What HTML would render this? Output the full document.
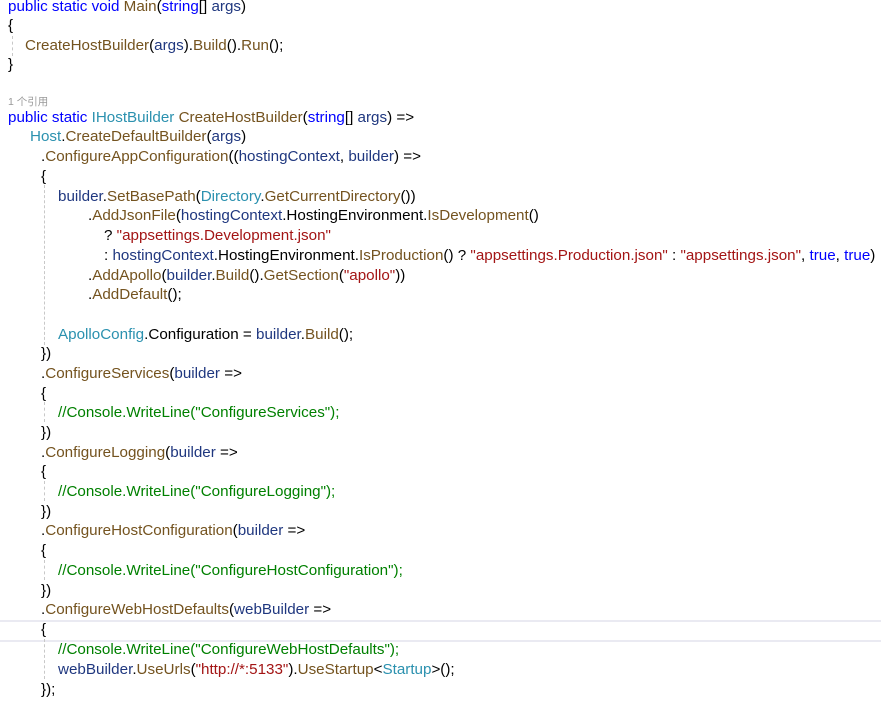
<!DOCTYPE html>
<html><head><meta charset="utf-8"><style>
html,body{margin:0;padding:0;width:881px;height:701px;background:#fff;overflow:hidden;position:relative}
.l{position:absolute;white-space:pre;font-family:"Liberation Sans","Noto Sans CJK SC",sans-serif;font-size:15.2px;line-height:20px;color:#000}
.k{color:#0000ff}.m{color:#74531f}.t{color:#2b91af}.v{color:#1f377f}.s{color:#a31515}.c{color:#008000}
.g{position:absolute;border-left:1px dashed #c8c8c8;width:0}
.hl{position:absolute;left:0;width:881px;height:18px;top:620px;border-top:2px solid #eaeaf2;border-bottom:2px solid #eaeaf2}
</style></head><body>
<div class="hl"></div>
<div class="g" style="left:12px;top:36px;height:20px"></div>
<div class="g" style="left:44px;top:185px;height:160px"></div>
<div class="g" style="left:44px;top:402px;height:20px"></div>
<div class="g" style="left:44px;top:481px;height:20px"></div>
<div class="g" style="left:44px;top:560px;height:20px"></div>
<div class="g" style="left:44px;top:639px;height:40px"></div>
<div class="l" style="top:-3px;left:8px"><span class="k">public static void</span> <span class="m">Main</span>(<span class="k">string</span>[] <span class="v">args</span>)</div>
<div class="l" style="top:16px;left:8px">{</div>
<div class="l" style="top:36px;left:25px"><span class="m">CreateHostBuilder</span>(<span class="v">args</span>).<span class="m">Build</span>().<span class="m">Run</span>();</div>
<div class="l" style="top:55px;left:8px">}</div>
<div class="l" style="top:94px;left:8px;font-size:10.5px;line-height:16px;color:#999">1 个引用</div>
<div class="l" style="top:108px;left:8px"><span class="k">public static</span> <span class="t">IHostBuilder</span> <span class="m">CreateHostBuilder</span>(<span class="k">string</span>[] <span class="v">args</span>) =&gt;</div>
<div class="l" style="top:127px;left:30px"><span class="t">Host</span>.<span class="m">CreateDefaultBuilder</span>(<span class="v">args</span>)</div>
<div class="l" style="top:147px;left:41px">.<span class="m">ConfigureAppConfiguration</span>((<span class="v">hostingContext</span>, <span class="v">builder</span>) =&gt;</div>
<div class="l" style="top:167px;left:41px">{</div>
<div class="l" style="top:187px;left:58px"><span class="v">builder</span>.<span class="m">SetBasePath</span>(<span class="t">Directory</span>.<span class="m">GetCurrentDirectory</span>())</div>
<div class="l" style="top:206px;left:88px">.<span class="m">AddJsonFile</span>(<span class="v">hostingContext</span>.HostingEnvironment.<span class="m">IsDevelopment</span>()</div>
<div class="l" style="top:226px;left:104px">? <span class="s">"appsettings.Development.json"</span></div>
<div class="l" style="top:246px;left:104px">: <span class="v">hostingContext</span>.HostingEnvironment.<span class="m">IsProduction</span>() ? <span class="s">"appsettings.Production.json"</span> : <span class="s">"appsettings.json"</span>, <span class="k">true</span>, <span class="k">true</span>)</div>
<div class="l" style="top:266px;left:88px">.<span class="m">AddApollo</span>(<span class="v">builder</span>.<span class="m">Build</span>().<span class="m">GetSection</span>(<span class="s">"apollo"</span>))</div>
<div class="l" style="top:285px;left:88px">.<span class="m">AddDefault</span>();</div>
<div class="l" style="top:325px;left:58px"><span class="t">ApolloConfig</span>.Configuration = <span class="v">builder</span>.<span class="m">Build</span>();</div>
<div class="l" style="top:344px;left:41px">})</div>
<div class="l" style="top:364px;left:41px">.<span class="m">ConfigureServices</span>(<span class="v">builder</span> =&gt;</div>
<div class="l" style="top:384px;left:41px">{</div>
<div class="l" style="top:403px;left:58px"><span class="c">//Console.WriteLine("ConfigureServices");</span></div>
<div class="l" style="top:423px;left:41px">})</div>
<div class="l" style="top:443px;left:41px">.<span class="m">ConfigureLogging</span>(<span class="v">builder</span> =&gt;</div>
<div class="l" style="top:462px;left:41px">{</div>
<div class="l" style="top:482px;left:58px"><span class="c">//Console.WriteLine("ConfigureLogging");</span></div>
<div class="l" style="top:502px;left:41px">})</div>
<div class="l" style="top:521px;left:41px">.<span class="m">ConfigureHostConfiguration</span>(<span class="v">builder</span> =&gt;</div>
<div class="l" style="top:541px;left:41px">{</div>
<div class="l" style="top:561px;left:58px"><span class="c">//Console.WriteLine("ConfigureHostConfiguration");</span></div>
<div class="l" style="top:581px;left:41px">})</div>
<div class="l" style="top:600px;left:41px">.<span class="m">ConfigureWebHostDefaults</span>(<span class="v">webBuilder</span> =&gt;</div>
<div class="l" style="top:620px;left:41px">{</div>
<div class="l" style="top:640px;left:58px"><span class="c">//Console.WriteLine("ConfigureWebHostDefaults");</span></div>
<div class="l" style="top:660px;left:58px"><span class="v">webBuilder</span>.<span class="m">UseUrls</span>(<span class="s">"http://*:5133"</span>).<span class="m">UseStartup</span>&lt;<span class="t">Startup</span>&gt;();</div>
<div class="l" style="top:680px;left:41px">});</div>
</body></html>
